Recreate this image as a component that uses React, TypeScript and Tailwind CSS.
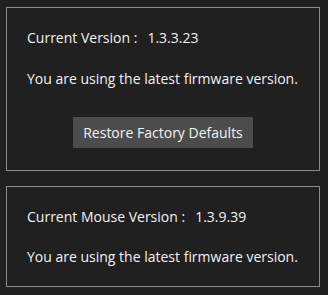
import React from 'react';

function VersionLine({ label, value }: { label: string; value: string }) {
  return (
    <div className="flex h-5 items-center">
      <span>{label}</span>
      <span className="ml-[10px]">{value}</span>
    </div>
  );
}

export default function App() {
  return (
    <div
      className="w-[328px] h-[295px] bg-[#202020] text-[#f2f2f2] text-[14px] leading-5 pt-[7px] pl-[6px]"
      style={{ fontFamily: '"Open Sans", "Noto Sans", sans-serif' }}
    >
      {/* Firmware */}
      <div className="w-[314px] h-[164px] border border-[#8c8c8c] pl-5 pt-[20px]">
        <VersionLine label="Current Version :" value="1.3.3.23" />
        <div className="mt-[21px] h-5 leading-5">You are using the latest firmware version.</div>
        <div className="flex justify-center pr-5 mt-[28px]">
          <button className="w-[180px] h-[31px] bg-[#4c4c4c] text-[#f2f2f2] text-[14px]">
            Restore Factory Defaults
          </button>
        </div>
      </div>

      {/* Mouse */}
      <div className="w-[314px] h-[101px] border border-[#8c8c8c] mt-[15px] pl-5 pt-[20px]">
        <VersionLine label="Current Mouse Version :" value="1.3.9.39" />
        <div className="mt-[20px] h-5">You are using the latest firmware version.</div>
      </div>
    </div>
  );
}
